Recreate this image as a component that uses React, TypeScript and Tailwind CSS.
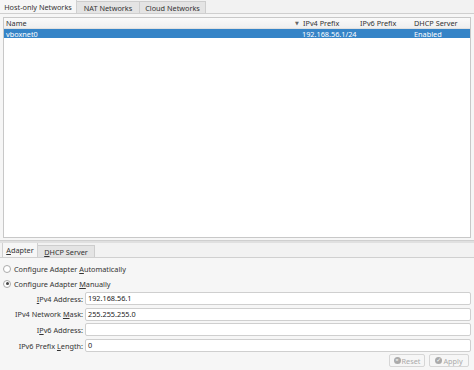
import React from "react";

const font = { fontFamily: '"Noto Sans", "DejaVu Sans", sans-serif' };

function Field({ label, u, value }: { label: string; u: number; value: string }) {
    return (
        <div className="flex items-center h-[15.6px]">
            <div className="w-[82px] text-right pr-[2px] whitespace-nowrap text-[#333]">
                {label.slice(0, u)}
                <span className="underline">{label[u]}</span>
                {label.slice(u + 1)}
            </div>
            <div className="flex-1 h-[13px] bg-white border border-[#cfcfcf] rounded-[2px] px-[2px] leading-[11px] text-[#222]">{value}</div>
        </div>
    );
}

export default function App() {
    return (
        <div className="w-[474px] h-[370px] bg-[#f2f2f2] text-[7.3px] leading-[10px] text-[#333] overflow-hidden flex flex-col" style={font}>
            <div className="flex h-[13px] items-end">
                <div className="h-[13px] w-[77px] bg-[#f6f6f6] border-r border-[#d0d0d0] flex items-center justify-center">Host-only Networks</div>
                <div className="h-[12px] w-[63px] bg-[#e4e4e4] border-r border-t border-[#cdcdcd] flex items-center justify-center">NAT Networks</div>
                <div className="h-[12px] w-[66px] bg-[#e4e4e4] border-r border-t border-[#cdcdcd] flex items-center justify-center">Cloud Networks</div>
            </div>
            <div className="border-t border-[#cfcfcf] bg-[#f6f6f6] px-[3px] pt-[3px] pb-[2px] h-[227px] flex flex-col">
                <div className="flex-1 bg-white border border-[#c8c8c8] flex flex-col">
                    <div className="flex h-[11px] items-center bg-gradient-to-b from-[#fafafa] to-[#efefef] border-b border-[#e0e0e0]">
                        <div className="w-[291px] pl-[2px] h-full flex items-center">Name</div>
                        <div className="w-[63px] h-full flex items-center relative">
                            <span className="absolute left-[0px] text-[5px] text-[#666]">▼</span>
                            <span className="pl-[8px]">IPv4 Prefix</span>
                        </div>
                        <div className="w-[53px] h-full flex items-center pl-[2px]">IPv6 Prefix</div>
                        <div className="flex-1 h-full flex items-center pl-[3px]">DHCP Server</div>
                    </div>
                    <div className="flex h-[9px] items-center bg-[#3584c7] text-white">
                        <div className="w-[298px] pl-[2px]">vboxnet0</div>
                        <div className="w-[56px]">192.168.56.1/24</div>
                        <div className="w-[53px]"></div>
                        <div className="flex-1 pl-[3px]">Enabled</div>
                    </div>
                </div>
            </div>
            <div className="h-[3px] bg-[#e0e0e0] border-t border-[#cfcfcf]"></div>
            <div className="flex h-[14px] items-end pl-[2px]">
                <div className="h-[14px] w-[36px] bg-[#f6f6f6] border-x border-[#d0d0d0] flex items-center justify-center">
                    <span><span className="underline">A</span>dapter</span>
                </div>
                <div className="h-[12px] w-[57px] bg-[#e4e4e4] border-r border-t border-[#cdcdcd] flex items-center justify-center">
                    <span><span className="underline">D</span>HCP Server</span>
                </div>
            </div>
            <div className="flex-1 bg-[#f6f6f6] border-t border-[#d0d0d0] px-[3px] pt-[3px] flex flex-col">
                <div className="flex items-center h-[15px] gap-[3px]">
                    <div className="w-[8px] h-[8px] rounded-full border border-[#aaa] bg-white"></div>
                    <span>Configure Adapter <span className="underline">A</span>utomatically</span>
                </div>
                <div className="flex items-center h-[15px] gap-[3px]">
                    <div className="w-[8px] h-[8px] rounded-full border border-[#aaa] bg-white flex items-center justify-center">
                        <div className="w-[3px] h-[3px] rounded-full bg-[#444]"></div>
                    </div>
                    <span>Configure Adapter <span className="underline">M</span>anually</span>
                </div>
                <div className="flex flex-col">
                    <Field label="IPv4 Address:" u={0} value="192.168.56.1" />
                    <Field label="IPv4 Network Mask:" u={13} value="255.255.255.0" />
                    <Field label="IPv6 Address:" u={1} value="" />
                    <Field label="IPv6 Prefix Length:" u={12} value="0" />
                </div>
                <div className="flex justify-end gap-[4px] mt-[1px] pr-[2px]">
                    <div className="h-[13px] w-[36px] border border-[#d6d6d6] rounded-[2px] flex items-center justify-center gap-[1px] text-[#aaa]">
                        <span className="w-[7px] h-[7px] rounded-full bg-[#aaa] text-white text-[6px] leading-[7px] text-center">×</span>Reset
                    </div>
                    <div className="h-[13px] w-[40px] border border-[#d6d6d6] rounded-[2px] flex items-center justify-center gap-[1px] text-[#aaa]">
                        <span className="w-[7px] h-[7px] rounded-full bg-[#aaa] text-white text-[6px] leading-[7px] text-center">✓</span>Apply
                    </div>
                </div>
            </div>
        </div>
    );
}
